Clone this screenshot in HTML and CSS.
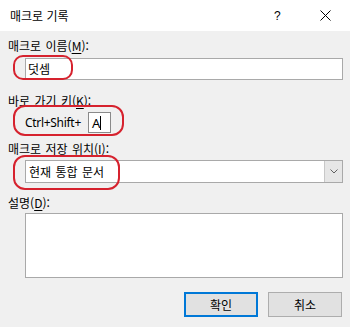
FILE: index.html
```html
<!DOCTYPE html>
<html lang="ko">
<head>
<meta charset="utf-8">
<link rel="stylesheet" href="styles.css">
</head>
<body>
<div class="window">
  <div class="titlebar">
    <span class="title">매크로 기록</span>
    <span class="help">?</span>
    <span class="close">
      <svg width="11" height="11" viewBox="0 0 11 11"><path d="M0.5 0.5L10.5 10.5M10.5 0.5L0.5 10.5" stroke="#000" stroke-width="1" fill="none"/></svg>
    </span>
  </div>
  <div class="content">
    <div class="label l1">매크로 이름(<u>M</u>):</div>
    <div class="field input1">덧셈</div>
    <div class="label l2">바로 가기 키(<u>K</u>):</div>
    <div class="shortcut">
      <span class="combo">Ctrl+Shift+</span>
      <span class="keybox">A<span class="caret"></span></span>
    </div>
    <div class="label l3">매크로 저장 위치(<u>I</u>):</div>
    <div class="field select">
      <span class="seltext">현재 통합 문서</span>
      <span class="dropbtn">
        <svg width="8" height="5" viewBox="0 0 8 5"><path d="M0.5 0.5L4 4L7.5 0.5" stroke="#606060" stroke-width="1" fill="none"/></svg>
      </span>
    </div>
    <div class="label l4">설명(<u>D</u>):</div>
    <div class="field textarea"></div>
    <div class="buttons">
      <div class="btn ok">확인</div>
      <div class="btn">취소</div>
    </div>
  </div>
  <div class="mark m1"></div>
  <div class="mark m2"></div>
  <div class="mark m3"></div>
</div>
</body>
</html>
```
FILE: styles.css
```css
html, body {
  margin: 0;
  padding: 0;
}
body {
  width: 350px;
  height: 327px;
  overflow: hidden;
  background: #f0f0f0;
  font-family: "Noto Sans CJK KR", "Noto Sans", sans-serif;
  font-size: 12px;
  color: #000;
}
.window {
  position: relative;
  width: 350px;
  height: 327px;
}
.titlebar {
  height: 31px;
  background: #fff;
  display: flex;
  align-items: center;
  padding-left: 10px;
  box-sizing: border-box;
}
.title {
  flex: 1;
  font-size: 12px;
}
.help {
  width: 10px;
  margin-right: 36px;
  font-family: "Liberation Sans", sans-serif;
  font-size: 12px;
}
.close {
  display: flex;
  margin-right: 19px;
}
.content {
  display: flex;
  flex-direction: column;
  padding-left: 8px;
  padding-right: 7px;
}
.label {
  height: 16px;
  line-height: 16px;
  white-space: nowrap;
  word-spacing: 1px;
}
.label u {
  text-underline-offset: 2px;
}
.l1 { margin-top: 7px; }
.l2 { margin-top: 13px; }
.l3 { margin-top: 8px; }
.l4 { margin-top: 12px; }
.field {
  margin-left: 17px;
  background: #fff;
  border: 1px solid #a9a9a9;
  box-sizing: border-box;
}
.input1 {
  margin-top: 4px;
  height: 22px;
  line-height: 20px;
  padding-left: 2px;
}
.shortcut {
  margin-top: 3px;
  margin-left: 17px;
  height: 21px;
  display: flex;
  align-items: center;
}
.combo {
  font-family: "Noto Sans", sans-serif;
  font-size: 12px;
  width: 63px;
  letter-spacing: -0.3px;
}
.keybox {
  width: 23px;
  height: 21px;
  box-sizing: border-box;
  background: #fff;
  border: 1px solid #8a8a8a;
  display: flex;
  align-items: center;
  padding-left: 3px;
  font-family: "Noto Sans", sans-serif;
  font-size: 13px;
}
.caret {
  display: inline-block;
  width: 1px;
  height: 14px;
  background: #000;
}
.select {
  margin-top: 3px;
  height: 23px;
  display: flex;
  align-items: center;
  padding-left: 3px;
}
.seltext {
  flex: 1;
  word-spacing: 1px;
}
.dropbtn {
  width: 17px;
  height: 21px;
  background: #e6e6e6;
  border-left: 1px solid #c8c8c8;
  display: flex;
  align-items: center;
  justify-content: center;
}
.textarea {
  margin-top: 2px;
  height: 65px;
}
.buttons {
  margin-top: 14px;
  display: flex;
  justify-content: flex-end;
  gap: 10px;
  padding-right: 1px;
}
.btn {
  width: 74px;
  height: 25px;
  box-sizing: border-box;
  background: #e1e1e1;
  border: 1px solid #adadad;
  display: flex;
  align-items: center;
  justify-content: center;
}
.btn.ok {
  border: 2px solid #0078d7;
}
.mark {
  position: absolute;
  border: 2px solid #d6222e;
  border-radius: 10px;
  box-sizing: border-box;
}
.m1 { left: 13px; top: 55px; width: 60px; height: 25px; }
.m2 { left: 13px; top: 105px; width: 111px; height: 31px; border-radius: 12px; }
.m3 { left: 13px; top: 155px; width: 107px; height: 35px; border-radius: 12px; }
```
